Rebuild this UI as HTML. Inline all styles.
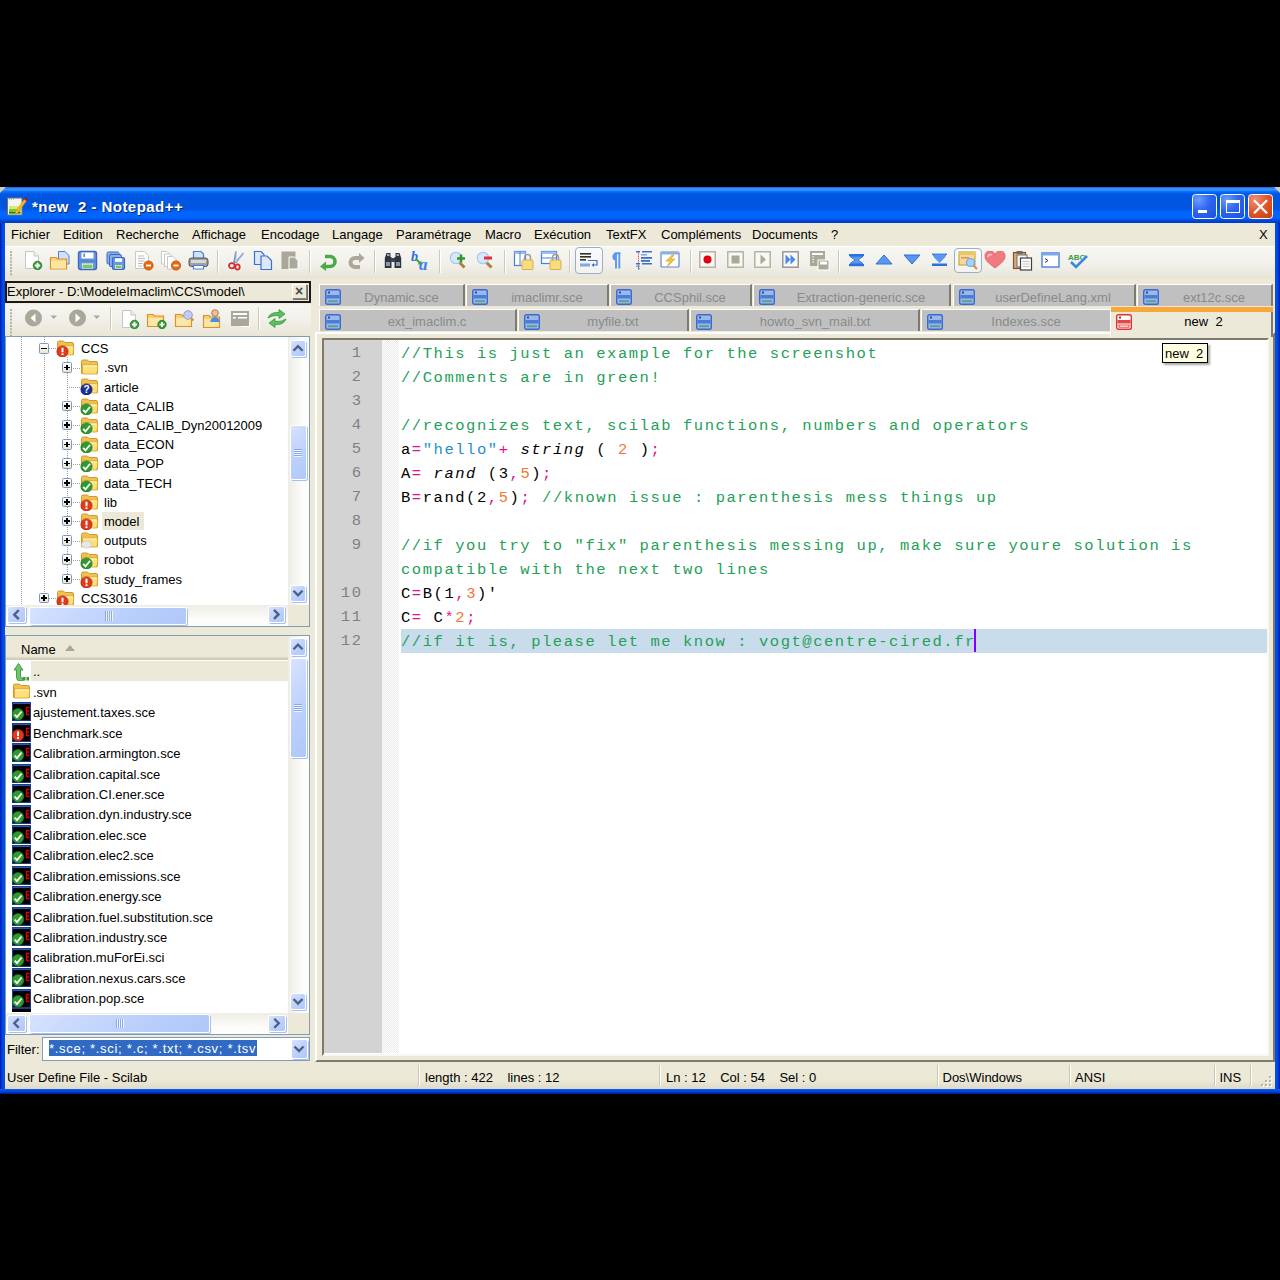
<!DOCTYPE html>
<html><head><meta charset="utf-8">
<style>
*{margin:0;padding:0;box-sizing:border-box}
html,body{width:1280px;height:1280px;background:#000;overflow:hidden}
body{position:relative;font-family:"Liberation Sans",sans-serif;font-size:13px;color:#000}
.a{position:absolute}
.t{position:absolute;white-space:pre;line-height:1}
#win{left:0;top:187px;width:1280px;height:906px;background:#0842D8}
#title{left:0;top:187px;width:1280px;height:36px;border-radius:0;
 background:linear-gradient(#1060F0 0px,#3A94FF 2px,#3A94FF 3px,#0A70FF 4.5px,#0058E2 7px,#0055E0 13px,#0055E0 21px,#005AEA 23px,#0066FF 25px,#0064FC 31px,#0048D8 33.5px,#0038C0 36px)}
#client{left:5px;top:223px;width:1270px;height:866px;background:#ECE9D8}
#menubar{left:5px;top:223px;width:1270px;height:23px;background:#ECE9D8}
#toolbar{left:5px;top:246px;width:1270px;height:33px;background:linear-gradient(#F7F6F1,#F1F0EA 55%,#E8E5D5);border-top:1px solid #fff}
.menu{top:227.6px}
.btn{top:194px;width:25px;height:25px;border:1px solid #fff;border-radius:3px}
.sbtn{border:1px solid #fff;border-radius:2.5px;background:linear-gradient(135deg,#D6E2FF,#BACFFB 60%,#B0C8F8);box-shadow:1px 1px 0 #A9BFE6}
.sep{position:absolute;width:2px;background:linear-gradient(90deg,#C5C2B2 50%,#fff 50%)}
.tab{position:absolute;height:22px;background:#C0C0C0;border-top:1.5px solid #fff;border-left:1.5px solid #fff;border-right:2px solid #7E7B6C;color:#808080;font-size:13px}
.tt{position:absolute;width:200px;text-align:center;white-space:pre;line-height:1;color:#8A8A8A}
.tab span{position:absolute;top:5px;white-space:pre;line-height:1}
.fn{font-style:italic}
.code{font-family:"Liberation Mono",monospace;font-size:15.5px;letter-spacing:1.545px;position:absolute;white-space:pre;line-height:24px;left:401px}
.cm{color:#24A058}
.op{color:#E0108A}
.nm{color:#F07830}
.st{color:#1E90D0}
.ln{position:absolute;font-family:"Liberation Mono",monospace;font-size:15.5px;letter-spacing:1.545px;color:#808080;text-align:right;width:40px;left:322.5px;line-height:24px}
</style></head><body>
<div id="win" class="a"></div>
<div id="title" class="a"></div>
<div class="t" style="left:32px;top:199px;color:#fff;font-weight:bold;font-size:15px;letter-spacing:0.45px;text-shadow:1px 1px 0 #0A246A">*new  2 - Notepad++</div>

<!-- title icon & buttons -->
<svg class="a" style="left:6px;top:195px" width="22" height="22" viewBox="0 0 22 22">
<rect x="1.5" y="3" width="14.5" height="17" fill="#F4F4F0" stroke="#707068" stroke-width="1"/>
<rect x="3" y="11" width="11.5" height="7.5" fill="#7CC830"/>
<rect x="3" y="11" width="11.5" height="3" fill="#D8E878"/>
<rect x="3" y="17" width="11.5" height="1.5" fill="#208010"/>
<path d="M3 4 H8" stroke="#6890D0" stroke-width="1.2" stroke-dasharray="1 1"/>
<path d="M10 18 L19.5 5" stroke="#E8A010" stroke-width="3"/>
<path d="M10 18 L19.5 5" stroke="#F8D040" stroke-width="1"/>
<circle cx="20" cy="4" r="1.6" fill="#C01010"/>
</svg>
<div class="a btn" style="left:1192px;top:194.3px;width:25.3px;height:25px;border:1.2px solid #fff;border-radius:3.5px;background:radial-gradient(circle at 25% 20%,#6A9CFF 0%,#2E66F0 45%,#1C50DC 100%)"></div>
<div class="a" style="left:1198px;top:210px;width:9px;height:3.3px;background:#fff"></div>
<div class="a btn" style="left:1220px;top:194.3px;width:25px;height:25px;border:1.2px solid #fff;border-radius:3.5px;background:radial-gradient(circle at 25% 20%,#6A9CFF 0%,#2E66F0 45%,#1C50DC 100%)"></div>
<div class="a" style="left:1226px;top:200px;width:13.5px;height:13.3px;border:1.3px solid #fff;border-top:3.5px solid #fff"></div>
<div class="a btn" style="left:1248px;top:194.3px;width:24.7px;height:25px;border:1.2px solid #fff;border-radius:3.5px;background:radial-gradient(circle at 25% 20%,#F09070 0%,#E25A30 45%,#C83C10 100%)"></div>
<svg class="a" style="left:1252px;top:199px" width="17" height="16" viewBox="0 0 17 16"><path d="M2 1.2 L15 14.2 M15 1.2 L2 14.2" stroke="#fff" stroke-width="2.3"/></svg>
<div id="client" class="a"></div>
<!-- window borders -->
<div class="a" style="left:0;top:223px;width:5px;height:870px;background:linear-gradient(90deg,#0018B0,#0040D8 40%,#0050E8 70%,#0848E0)"></div>
<div class="a" style="left:1275px;top:223px;width:5px;height:870px;background:linear-gradient(90deg,#0848E0,#0050E8 30%,#0040D8 60%,#0018B0)"></div>
<div class="a" style="left:0;top:1089px;width:1280px;height:4.5px;background:linear-gradient(#0A5CF0,#0048D8 45%,#0028B8 80%,#0018A0)"></div>
<svg class="a" style="left:0;top:187px" width="7" height="7" viewBox="0 0 7 7"><path d="M0 0 H6 L0 6 Z" fill="#D0CCBC"/></svg>
<svg class="a" style="left:1273px;top:187px" width="7" height="7" viewBox="0 0 7 7"><path d="M1 0 H7 V6 Z" fill="#D0CCBC"/></svg>

<div id="menubar" class="a"></div>
<div class="t menu" style="left:11px">Fichier</div>
<div class="t menu" style="left:63px">Edition</div>
<div class="t menu" style="left:116px">Recherche</div>
<div class="t menu" style="left:192px">Affichage</div>
<div class="t menu" style="left:261px">Encodage</div>
<div class="t menu" style="left:332px">Langage</div>
<div class="t menu" style="left:396px">Paramétrage</div>
<div class="t menu" style="left:485px">Macro</div>
<div class="t menu" style="left:534px">Exécution</div>
<div class="t menu" style="left:606px">TextFX</div>
<div class="t menu" style="left:661px">Compléments</div>
<div class="t menu" style="left:752px">Documents</div>
<div class="t menu" style="left:831px">?</div>
<div class="t menu" style="left:1259px">X</div>
<div id="toolbar" class="a"></div>
<!--TB-->
<svg class="a" style="left:9px;top:251px" width="4" height="26" viewBox="0 0 4 26"><rect x="1" y="0.0" width="2" height="2" fill="#B8B4A2"/><rect x="1" y="3.2" width="2" height="2" fill="#B8B4A2"/><rect x="1" y="6.4" width="2" height="2" fill="#B8B4A2"/><rect x="1" y="9.600000000000001" width="2" height="2" fill="#B8B4A2"/><rect x="1" y="12.8" width="2" height="2" fill="#B8B4A2"/><rect x="1" y="16.0" width="2" height="2" fill="#B8B4A2"/><rect x="1" y="19.200000000000003" width="2" height="2" fill="#B8B4A2"/><rect x="1" y="22.400000000000002" width="2" height="2" fill="#B8B4A2"/></svg>
<svg class="a" style="left:23px;top:250px" width="20" height="20" viewBox="0 0 20 20"><path d="M2.5 1.5 H11 L15.5 6 V18.5 H2.5 Z" fill="#fff" stroke="#C6C6C6" stroke-width="1"/><path d="M11 1.5 V6 H15.5" fill="#EEE" stroke="#C6C6C6"/><circle cx="14.5" cy="15.5" r="4.3" fill="#3A9A3A" stroke="#1F7A1F" stroke-width="0.8"/><path d="M14.5 12.8 V18.2 M11.8 15.5 H17.2" stroke="#fff" stroke-width="1.8"/></svg>
<svg class="a" style="left:49px;top:250px" width="22" height="20" viewBox="0 0 22 20"><path d="M9.5 1.5 H16 L20 5.5 V14 H9.5 Z" fill="#CFE0F8" stroke="#4A80D8" stroke-width="1"/><path d="M1.5 7.5 H7 L8.5 9 H17.5 V19 H1.5 Z" fill="#F8D880" stroke="#E0902A" stroke-width="1.2"/><path d="M2 11 H17 V18.5 H2 Z" fill="#FBE6A0"/></svg>
<svg class="a" style="left:77px;top:250px" width="21" height="21" viewBox="0 0 21 21"><rect x="1.5" y="1.5" width="18" height="18" rx="2" fill="#6A98DC" stroke="#3A68C0" stroke-width="1.4"/><rect x="4.5" y="2.5" width="12" height="6" fill="#fff"/><rect x="6.5" y="3.5" width="1.3" height="3.5" fill="#3A68C0"/><rect x="2.5" y="9.5" width="16" height="3" fill="#5A88D0"/><rect x="5" y="13.5" width="11" height="5" fill="#fff"/><rect x="5.5" y="14.5" width="10" height="3.5" fill="#7CC860"/></svg>
<svg class="a" style="left:106px;top:251px" width="20" height="20" viewBox="0 0 20 20"><rect x="1" y="1" width="12" height="12" rx="1.5" fill="#8AB0E8" stroke="#3A68C0" stroke-width="1"/><rect x="3.5" y="3.5" width="12" height="12" rx="1.5" fill="#8AB0E8" stroke="#3A68C0" stroke-width="1"/><rect x="6.5" y="6.5" width="12" height="12" rx="1.5" fill="#6A98DC" stroke="#3A68C0" stroke-width="1.2"/><rect x="9" y="7.3" width="7" height="3.5" fill="#fff"/><rect x="9" y="14" width="7" height="3.5" fill="#fff"/><rect x="9.5" y="14.5" width="6" height="2.5" fill="#7CC860"/></svg>
<svg class="a" style="left:134px;top:250px" width="20" height="21" viewBox="0 0 20 21"><path d="M1.5 1.5 H10.5 L14.5 5.5 V18.5 H1.5 Z" fill="#fff" stroke="#C8C8C8" stroke-width="1"/><path d="M4 6 H10 M4 8.5 H11 M4 11 H11 M4 13.5 H9 M4 16 H8" stroke="#A8A8A8" stroke-width="0.8"/><circle cx="14.5" cy="15.5" r="4.6" fill="#E86A10" stroke="#C04A00" stroke-width="0.8"/><path d="M12 15.5 H17" stroke="#fff" stroke-width="1.8"/></svg>
<svg class="a" style="left:160px;top:250px" width="21" height="21" viewBox="0 0 21 21"><path d="M1.5 1.5 H7 L9.5 4 V14 H1.5 Z" fill="#fff" stroke="#C8C8C8"/><path d="M4.5 4 H10 L12.5 6.5 V16.5 H4.5 Z" fill="#fff" stroke="#C8C8C8"/><path d="M7.5 6.5 H13 L16 9.5 V19 H7.5 Z" fill="#fff" stroke="#C8C8C8"/><circle cx="16" cy="15.5" r="4.6" fill="#E86A10" stroke="#C04A00" stroke-width="0.8"/><path d="M13.5 15.5 H18.5" stroke="#fff" stroke-width="1.8"/></svg>
<svg class="a" style="left:188px;top:250px" width="21" height="21" viewBox="0 0 21 21"><path d="M5.5 1.5 H13 L15.5 4 V9 H5.5 Z" fill="#CFE2FA" stroke="#4A80D8" stroke-width="1.2"/><rect x="1" y="8" width="19" height="8.5" rx="2.5" fill="#A0A0A0" stroke="#505050" stroke-width="1"/><rect x="3" y="10" width="15" height="3" fill="#D8D8D8"/><path d="M5.5 15.5 H15.5 V19 H5.5 Z" fill="#fff" stroke="#4A80D8" stroke-width="1.2"/></svg>
<div class="a" style="left:217px;top:250px;width:1px;height:23px;background:#CDC9B5"></div><div class="a" style="left:218px;top:250px;width:1px;height:23px;background:#fff"></div>
<svg class="a" style="left:227px;top:250px" width="18" height="21" viewBox="0 0 18 21"><path d="M7 13 L9 1.5 M8.5 13 L16.5 3" stroke="#6E90C0" stroke-width="1.6"/><path d="M9 1.5 L9.5 12 M16.5 3 L10 12" stroke="#B8CCE8" stroke-width="0.8"/><ellipse cx="4.8" cy="15.8" rx="2.8" ry="2.6" fill="none" stroke="#D03030" stroke-width="1.8"/><ellipse cx="10.5" cy="17" rx="2.2" ry="2.6" fill="none" stroke="#D03030" stroke-width="1.8"/></svg>
<svg class="a" style="left:253px;top:250px" width="21" height="21" viewBox="0 0 21 21"><path d="M1.5 1.5 H8 L11 4.5 V14.5 H1.5 Z" fill="#DCE8F8" stroke="#3C70D0" stroke-width="1.2"/><path d="M8 6 H14 L18.5 10.5 V19.5 H8 Z" fill="#DCE8F8" stroke="#3C70D0" stroke-width="1.2"/></svg>
<svg class="a" style="left:280px;top:250px" width="22" height="21" viewBox="0 0 22 21"><rect x="1.5" y="1.5" width="14" height="17.5" fill="#ACA899"/><path d="M9 7 H14.5 L18 10.5 V19 H9 Z" fill="#ACA899" stroke="#fff" stroke-width="1"/></svg>
<div class="a" style="left:309px;top:250px;width:1px;height:23px;background:#CDC9B5"></div><div class="a" style="left:310px;top:250px;width:1px;height:23px;background:#fff"></div>
<svg class="a" style="left:319px;top:252px" width="20" height="19" viewBox="0 0 20 19"><path d="M6 4.5 H11 A5 5 0 0 1 11 14.5 H6" fill="none" stroke="#4AAA4A" stroke-width="3.6"/><path d="M1 14.5 L7 9.5 V19 Z" fill="#4AAA4A"/></svg>
<svg class="a" style="left:346px;top:252px" width="20" height="19" viewBox="0 0 20 19"><path d="M14 6 H9 A4.5 4.5 0 0 0 9 15 H14" fill="none" stroke="#ACA899" stroke-width="4"/><path d="M18.5 6 L13 1 V11 Z" fill="#ACA899"/></svg>
<div class="a" style="left:374px;top:250px;width:1px;height:23px;background:#CDC9B5"></div><div class="a" style="left:375px;top:250px;width:1px;height:23px;background:#fff"></div>
<svg class="a" style="left:384px;top:252px" width="18" height="17" viewBox="0 0 18 17"><path d="M2.5 1 H6.5 V5 H7.5 V16 H0.8 V6 Z" fill="#2E3440"/><path d="M15.5 1 H11.5 V5 H10.5 V16 H17.2 V6 Z" fill="#2E3440"/><rect x="7" y="6" width="4" height="4" fill="#3E4450"/><rect x="3" y="2" width="2.5" height="2" fill="#A0A8B8"/><rect x="12.5" y="2" width="2.5" height="2" fill="#A0A8B8"/><rect x="2" y="10" width="4" height="4" fill="#9098A8"/><rect x="12" y="10" width="4" height="4" fill="#9098A8"/></svg>
<svg class="a" style="left:410px;top:250px" width="22" height="21" viewBox="0 0 22 21"><text x="1" y="11" font-family="Liberation Serif" font-style="italic" font-weight="bold" font-size="14" fill="#2A70E0">b</text><text x="9" y="20" font-family="Liberation Serif" font-style="italic" font-weight="bold" font-size="17" fill="#3A80F0">a</text><path d="M6 9 L10 13" stroke="#3AA03A" stroke-width="1.8"/><path d="M11.5 14.5 L11.5 10.5 L7.5 14.5 Z" fill="#3AA03A"/></svg>
<div class="a" style="left:439px;top:250px;width:1px;height:23px;background:#CDC9B5"></div><div class="a" style="left:440px;top:250px;width:1px;height:23px;background:#fff"></div>
<svg class="a" style="left:449px;top:251px" width="19" height="18" viewBox="0 0 19 18"><path d="M10 11 L15.5 16.5" stroke="#B08040" stroke-width="3"/><circle cx="7" cy="7" r="5.7" fill="#D8E8FA" stroke="#A8C8F0" stroke-width="1.2"/><path d="M12 3.5 V11.5 M8 7.5 H16" stroke="#2E9A2E" stroke-width="2.6"/></svg>
<svg class="a" style="left:476px;top:251px" width="19" height="18" viewBox="0 0 19 18"><path d="M10 11 L15.5 16.5" stroke="#B08040" stroke-width="3"/><circle cx="7" cy="7" r="5.7" fill="#D8E8FA" stroke="#A8C8F0" stroke-width="1.2"/><rect x="8" y="5.5" width="8" height="3" fill="#E03040"/></svg>
<div class="a" style="left:504px;top:250px;width:1px;height:23px;background:#CDC9B5"></div><div class="a" style="left:505px;top:250px;width:1px;height:23px;background:#fff"></div>
<svg class="a" style="left:513px;top:250px" width="21" height="21" viewBox="0 0 21 21"><rect x="1.5" y="1.5" width="11" height="14" fill="#fff" stroke="#4A80D8" stroke-width="1.2"/><rect x="1.5" y="1.5" width="11" height="2.5" fill="#9CC0F0"/><path d="M7 1.5 V15.5" stroke="#4A80D8"/><rect x="9" y="10" width="11" height="9.5" rx="1" fill="#F8DC80" stroke="#D8B050"/><path d="M11.5 10 V7.5 A3 3 0 0 1 17.5 7.5 V10" fill="none" stroke="#A0A0A0" stroke-width="1.6"/></svg>
<svg class="a" style="left:540px;top:250px" width="22" height="21" viewBox="0 0 22 21"><rect x="1.5" y="1.5" width="15" height="12" fill="#fff" stroke="#4A80D8" stroke-width="1.2"/><rect x="1.5" y="1.5" width="15" height="2.5" fill="#9CC0F0"/><path d="M1.5 8 H16.5" stroke="#4A80D8"/><rect x="10" y="10" width="11" height="9.5" rx="1" fill="#F8DC80" stroke="#D8B050"/><path d="M12.5 10 V7.5 A3 3 0 0 1 18.5 7.5 V10" fill="none" stroke="#A0A0A0" stroke-width="1.6"/></svg>
<div class="a" style="left:569px;top:250px;width:1px;height:23px;background:#CDC9B5"></div><div class="a" style="left:570px;top:250px;width:1px;height:23px;background:#fff"></div>
<div class="a" style="left:575px;top:247px;width:27.5px;height:26.5px;border:1.5px solid #98AECD;border-radius:4px;background:linear-gradient(#FBFBFD,#F2F2F0)"></div>
<svg class="a" style="left:579px;top:252px" width="20" height="17" viewBox="0 0 20 17"><rect x="1" y="1" width="11" height="1.6" fill="#303030"/><rect x="1" y="4" width="11" height="1.6" fill="#303030"/><rect x="1" y="7" width="6" height="1.6" fill="#303030"/><path d="M9 8.5 H18 V13 H14" fill="none" stroke="#3A70D0" stroke-width="1.2"/><path d="M12.5 13 L15 11 V15 Z" fill="#3A70D0"/><rect x="1" y="11.5" width="10" height="3" fill="#7AA8E8"/></svg>
<svg class="a" style="left:608px;top:252px" width="14" height="18" viewBox="0 0 14 18"><path d="M6.5 1.2 H12.5 M8 1.2 V16.5 M11.3 1.2 V16.5" fill="none" stroke="#5A98F0" stroke-width="1.9"/><path d="M8 1 A3.6 3.8 0 0 0 8 8.6 Z" fill="#5A98F0"/></svg>
<svg class="a" style="left:635px;top:250px" width="19" height="20" viewBox="0 0 19 20"><path d="M3.5 1 V19" stroke="#E03030" stroke-width="1" stroke-dasharray="1.3 1"/><rect x="1" y="1" width="4" height="1.5" fill="#3A70D0"/><rect x="7" y="1" width="10" height="1.5" fill="#3A70D0"/><rect x="6" y="4" width="6" height="1.5" fill="#7AA8E8"/><rect x="6" y="7" width="11" height="1.8" fill="#3A70D0"/><rect x="6" y="10" width="9" height="1.8" fill="#3A70D0"/><rect x="1" y="13" width="4" height="1.5" fill="#3A70D0"/><rect x="7" y="13" width="10" height="1.5" fill="#3A70D0"/><rect x="1" y="15.5" width="4" height="1.5" fill="#7AA8E8"/><rect x="3" y="18" width="1.5" height="1.5" fill="#3A70D0"/></svg>
<svg class="a" style="left:660px;top:251px" width="21" height="18" viewBox="0 0 21 18"><rect x="1" y="1" width="18" height="15" rx="1" fill="#FFFFFF" stroke="#5A88D0" stroke-width="1.2"/><rect x="1" y="1" width="18" height="2.5" fill="#8AB0E8"/><path d="M12 4 L6 10 H10 L7 16 L15 8 H11 L14 4 Z" fill="#F0C848" stroke="#C8A020" stroke-width="0.6"/></svg>
<div class="a" style="left:690px;top:250px;width:1px;height:23px;background:#CDC9B5"></div><div class="a" style="left:691px;top:250px;width:1px;height:23px;background:#fff"></div>
<svg class="a" style="left:699px;top:251px" width="17" height="17" viewBox="0 0 17 17"><rect x="0.8" y="0.8" width="15.4" height="15.4" fill="#F8F8F4" stroke="#ACA899" stroke-width="1.3"/><circle cx="8.5" cy="8.5" r="4" fill="#E00010"/></svg>
<svg class="a" style="left:727px;top:251px" width="17" height="17" viewBox="0 0 17 17"><rect x="0.8" y="0.8" width="15.4" height="15.4" fill="#F8F8F4" stroke="#ACA899" stroke-width="1.3"/><rect x="4.5" y="4.5" width="8" height="8" fill="#ACA899"/></svg>
<svg class="a" style="left:754px;top:251px" width="17" height="17" viewBox="0 0 17 17"><rect x="0.8" y="0.8" width="15.4" height="15.4" fill="#F8F8F4" stroke="#ACA899" stroke-width="1.3"/><path d="M6.5 3.5 L12 8.5 L6.5 13.5 Z" fill="#ACA899"/></svg>
<svg class="a" style="left:782px;top:251px" width="17" height="17" viewBox="0 0 17 17"><rect x="0.8" y="0.8" width="15.4" height="15.4" fill="#F8F8F4" stroke="#8A8A8A" stroke-width="1.3"/><path d="M3.5 3.5 L8.5 8.5 L3.5 13.5 Z M8.5 3.5 L13.5 8.5 L8.5 13.5 Z" fill="#4A88F0"/></svg>
<svg class="a" style="left:809px;top:250px" width="21" height="21" viewBox="0 0 21 21"><rect x="1" y="1" width="15" height="15" fill="#ACA899"/><rect x="3" y="3" width="11" height="2" fill="#fff"/><path d="M3.5 7 H5 M3.5 9.5 H5 M3.5 12 H5" stroke="#fff" stroke-width="1.2"/><rect x="9" y="10" width="11" height="10" fill="#ACA899" stroke="#fff" stroke-width="1"/><rect x="11" y="11.5" width="7" height="3" fill="#fff"/></svg>
<div class="a" style="left:838px;top:250px;width:1px;height:23px;background:#CDC9B5"></div><div class="a" style="left:839px;top:250px;width:1px;height:23px;background:#fff"></div>
<svg class="a" style="left:848px;top:253px" width="17" height="14" viewBox="0 0 17 14"><rect x="1" y="1" width="15" height="2.2" fill="#2A70E0"/><path d="M2 3.5 H15 L10 7 L15 10.5 H2 L7 7 Z" fill="#5A98F0" stroke="#2A70E0" stroke-width="0.8"/><rect x="1" y="11" width="15" height="2.2" fill="#2A70E0"/></svg>
<svg class="a" style="left:875px;top:254px" width="18" height="11" viewBox="0 0 18 11"><path d="M9 1 L17 10 H1 Z" fill="#5A98F0" stroke="#2A70E0" stroke-width="1"/></svg>
<svg class="a" style="left:903px;top:254px" width="18" height="11" viewBox="0 0 18 11"><path d="M1 1 H17 L9 10 Z" fill="#5A98F0" stroke="#2A70E0" stroke-width="1"/></svg>
<svg class="a" style="left:931px;top:253px" width="17" height="14" viewBox="0 0 17 14"><path d="M1 1 H16 L10 6.5 H7 Z" fill="#5A98F0" stroke="#2A70E0" stroke-width="0.8"/><path d="M2 3.5 H15 L8.5 10 Z" fill="#5A98F0"/><rect x="1" y="10.5" width="15" height="2.5" fill="#2A70E0"/></svg>
<div class="a" style="left:954px;top:247.5px;width:27.5px;height:25.5px;border:1.5px solid #98AECD;border-radius:4px;background:linear-gradient(#FBFBFD,#F2F2F0)"></div>
<svg class="a" style="left:958px;top:251px" width="21" height="19" viewBox="0 0 21 19"><rect x="1" y="1" width="16" height="13" fill="#F8D8A0" stroke="#C8B030" stroke-width="1.2"/><rect x="1" y="1" width="16" height="3" fill="#E8C860"/><rect x="3" y="6" width="8" height="1.5" fill="#E09050"/><path d="M15 14 L19 18" stroke="#D09050" stroke-width="2.2"/><circle cx="12.5" cy="11.5" r="4" fill="#A8D0F8" stroke="#6AA8E8" stroke-width="1.2"/></svg>
<svg class="a" style="left:984px;top:251px" width="22" height="18" viewBox="0 0 22 18"><path d="M11 17 C4 12 1 9 1 5.5 A4.5 4.5 0 0 1 11 4 A4.5 4.5 0 0 1 21 5.5 C21 9 18 12 11 17 Z" fill="#F07A80" stroke="#E06068" stroke-width="0.8"/><path d="M4 6 A2.5 2.5 0 0 1 8 4" stroke="#FFC8D0" stroke-width="1.5" fill="none"/></svg>
<svg class="a" style="left:1012px;top:250px" width="21" height="21" viewBox="0 0 21 21"><rect x="1.5" y="2.5" width="12" height="16" fill="#D8A878" stroke="#8A5028" stroke-width="1.2"/><rect x="4.5" y="1" width="6" height="3" fill="#6A6A6A"/><rect x="5" y="5" width="10" height="12" fill="#F8F8F8" stroke="#707070" stroke-width="1"/><rect x="8.5" y="8" width="11" height="12" fill="#FFFFFF" stroke="#404040" stroke-width="1.2"/><path d="M10.5 11.5 H17.5 M10.5 14 H17.5 M10.5 16.5 H17.5" stroke="#B0B0B0" stroke-width="0.8"/></svg>
<svg class="a" style="left:1041px;top:252px" width="19" height="16" viewBox="0 0 19 16"><rect x="1" y="1" width="17" height="14" fill="#fff" stroke="#4A80D8" stroke-width="1.4"/><rect x="1" y="1" width="17" height="2.5" fill="#7AA8E8"/><path d="M4 6.5 L7 8.5 L4 10.5" fill="none" stroke="#404040" stroke-width="1"/></svg>
<svg class="a" style="left:1067px;top:252px" width="22" height="17" viewBox="0 0 22 17"><text x="1" y="7.5" font-family="Liberation Sans" font-weight="bold" font-size="8" fill="#3A9A4A">ABC</text><path d="M4 10 L9 15 L20 4" fill="none" stroke="#3A88E0" stroke-width="2.6"/></svg>
<!--/TB-->


<!-- LEFT PANEL -->
<div class="a" style="left:5px;top:281px;width:306px;height:22px;border:2px solid #1a1a1a;background:#ECE9D8"></div>
<div class="t" style="left:7px;top:285px">Explorer - D:\ModeleImaclim\CCS\model\</div>
<div class="a" style="left:292px;top:284px;width:15px;height:15px;background:#ECE9D8;border-top:1px solid #fff;border-left:1px solid #fff;border-right:1px solid #8A877A;border-bottom:1px solid #8A877A;box-shadow:1px 1px 0 #716F64"></div>
<div class="t" style="left:295px;top:284px;font-size:14px;font-weight:bold;color:#4a4a44">×</div>
<div class="a" style="left:5px;top:303px;width:306px;height:33px;background:linear-gradient(#ECE9D8 0px,#F6F5F0 2px,#F1F0EA 50%,#E9E6D6 100%)"></div>

<!-- tree -->
<div class="a" style="left:5px;top:336px;width:305px;height:291px;background:#fff;border:1px solid #7F9DB9"></div>
<div class="a" style="left:102px;top:512px;width:42px;height:18px;background:#ECE9D8"></div>

<div class="tree">
<div class="t" style="left:81px;top:341.8px">CCS</div>
<div class="t" style="left:104px;top:361.3px">.svn</div>
<div class="t" style="left:104px;top:380.5px">article</div>
<div class="t" style="left:104px;top:399.7px">data_CALIB</div>
<div class="t" style="left:104px;top:418.9px">data_CALIB_Dyn20012009</div>
<div class="t" style="left:104px;top:438.1px">data_ECON</div>
<div class="t" style="left:104px;top:457.3px">data_POP</div>
<div class="t" style="left:104px;top:476.5px">data_TECH</div>
<div class="t" style="left:104px;top:495.7px">lib</div>
<div class="t" style="left:104px;top:514.9px">model</div>
<div class="t" style="left:104px;top:534.1px">outputs</div>
<div class="t" style="left:104px;top:553.3px">robot</div>
<div class="t" style="left:104px;top:572.5px">study_frames</div>
<div class="t" style="left:81px;top:591.7px">CCS3016</div>
</div>

<!-- list -->
<div class="a" style="left:5px;top:635px;width:305px;height:400px;background:#fff;border:1px solid #7F9DB9"></div>
<div class="a" style="left:6px;top:636px;width:283px;height:24px;background:linear-gradient(#ECE9D8 85%,#D8D2BD 92%,#CBC7B8)"></div>
<div class="t" style="left:21px;top:643px">Name</div>
<div class="a" style="left:65px;top:645px;width:0;height:0;border-left:5.5px solid transparent;border-right:5.5px solid transparent;border-bottom:6px solid #ACA899"></div>
<div class="a" style="left:31px;top:661px;width:258px;height:20px;background:#ECE9D8"></div>
<div class="list">
<div class="t" style="left:33px;top:665.3px">..</div>
<div class="t" style="left:33px;top:685.8px">.svn</div>
<div class="t" style="left:33px;top:706.2px">ajustement.taxes.sce</div>
<div class="t" style="left:33px;top:726.7px">Benchmark.sce</div>
<div class="t" style="left:33px;top:747.1px">Calibration.armington.sce</div>
<div class="t" style="left:33px;top:767.5px">Calibration.capital.sce</div>
<div class="t" style="left:33px;top:788.0px">Calibration.CI.ener.sce</div>
<div class="t" style="left:33px;top:808.4px">Calibration.dyn.industry.sce</div>
<div class="t" style="left:33px;top:828.8px">Calibration.elec.sce</div>
<div class="t" style="left:33px;top:849.3px">Calibration.elec2.sce</div>
<div class="t" style="left:33px;top:869.7px">Calibration.emissions.sce</div>
<div class="t" style="left:33px;top:890.1px">Calibration.energy.sce</div>
<div class="t" style="left:33px;top:910.6px">Calibration.fuel.substitution.sce</div>
<div class="t" style="left:33px;top:931.0px">Calibration.industry.sce</div>
<div class="t" style="left:33px;top:951.4px">calibration.muForEi.sci</div>
<div class="t" style="left:33px;top:971.8px">Calibration.nexus.cars.sce</div>
<div class="t" style="left:33px;top:992.3px">Calibration.pop.sce</div>
</div>

<!--ITEMS-->
<div class="a" style="left:21px;top:337px;width:1px;height:268px;background:repeating-linear-gradient(#A0A0A0 0 1px,transparent 1px 2px)"></div>
<div class="a" style="left:44px;top:337px;width:1px;height:261px;background:repeating-linear-gradient(#A0A0A0 0 1px,transparent 1px 2px)"></div>
<div class="a" style="left:67px;top:357px;width:1px;height:223px;background:repeating-linear-gradient(#A0A0A0 0 1px,transparent 1px 2px)"></div>
<div class="a" style="left:49px;top:348.3px;width:7px;height:1px;background:repeating-linear-gradient(90deg,#A0A0A0 0 1px,transparent 1px 2px)"></div>
<div class="a" style="left:38.5px;top:343px;width:10.5px;height:10.5px;border:1px solid #7A98C0;border-radius:1.5px;background:linear-gradient(#FFFFFF,#E8E4D4)"></div><div class="a" style="left:41.0px;top:347.5px;width:5.5px;height:1.6px;background:#000"></div>
<svg class="a" style="left:56px;top:340px" width="20" height="17" viewBox="0 0 20 17"><path d="M1.5 2.5 Q1.5 1 3 1 H7.5 L9 2.5 H16 Q17.5 2.5 17.5 4 V14.5 H1.5 Z" fill="#F0C050" stroke="#D09A30" stroke-width="1"/><path d="M2.5 6 H17 Q18 6 17.8 7.5 L17 15 H2.5 Z" fill="#FCE07A" stroke="#D8A030" stroke-width="0.8"/><path d="M3 7 H16.5" stroke="#FFF4C0" stroke-width="1.2"/><circle cx="6.5" cy="11.5" r="5.6" fill="#E03A1A" stroke="#B02010" stroke-width="0.7"/><rect x="5.5" y="7.7" width="2" height="4.6" fill="#fff"/><rect x="5.5" y="13.3" width="2" height="1.8" fill="#fff"/></svg>
<div class="a" style="left:67px;top:368px;width:13px;height:1px;background:repeating-linear-gradient(90deg,#A0A0A0 0 1px,transparent 1px 2px)"></div>
<div class="a" style="left:61.5px;top:362.13000000000005px;width:10.5px;height:10.5px;border:1px solid #7A98C0;border-radius:1.5px;background:linear-gradient(#FFFFFF,#E8E4D4)"></div><div class="a" style="left:64.0px;top:366.63000000000005px;width:5.5px;height:1.6px;background:#000"></div><div class="a" style="left:66.0px;top:364.63000000000005px;width:1.6px;height:5.5px;background:#000"></div>
<svg class="a" style="left:79.5px;top:359.23px" width="20" height="17" viewBox="0 0 20 17"><path d="M1.5 2.5 Q1.5 1 3 1 H7.5 L9 2.5 H16 Q17.5 2.5 17.5 4 V14.5 H1.5 Z" fill="#F0C050" stroke="#D09A30" stroke-width="1"/><path d="M2.5 6 H17 Q18 6 17.8 7.5 L17 15 H2.5 Z" fill="#FCE07A" stroke="#D8A030" stroke-width="0.8"/><path d="M3 7 H16.5" stroke="#FFF4C0" stroke-width="1.2"/></svg>
<div class="a" style="left:67px;top:387px;width:13px;height:1px;background:repeating-linear-gradient(90deg,#A0A0A0 0 1px,transparent 1px 2px)"></div>
<svg class="a" style="left:79.5px;top:378.46px" width="20" height="17" viewBox="0 0 20 17"><path d="M1.5 2.5 Q1.5 1 3 1 H7.5 L9 2.5 H16 Q17.5 2.5 17.5 4 V14.5 H1.5 Z" fill="#F0C050" stroke="#D09A30" stroke-width="1"/><path d="M2.5 6 H17 Q18 6 17.8 7.5 L17 15 H2.5 Z" fill="#FCE07A" stroke="#D8A030" stroke-width="0.8"/><path d="M3 7 H16.5" stroke="#FFF4C0" stroke-width="1.2"/><circle cx="6.5" cy="11.5" r="5.6" fill="#1A2E9A" stroke="#0A1A70" stroke-width="0.7"/><text x="6.5" y="15.1" text-anchor="middle" font-family="Liberation Sans" font-weight="bold" font-size="10" fill="#fff">?</text></svg>
<div class="a" style="left:67px;top:406px;width:13px;height:1px;background:repeating-linear-gradient(90deg,#A0A0A0 0 1px,transparent 1px 2px)"></div>
<div class="a" style="left:61.5px;top:400.59000000000003px;width:10.5px;height:10.5px;border:1px solid #7A98C0;border-radius:1.5px;background:linear-gradient(#FFFFFF,#E8E4D4)"></div><div class="a" style="left:64.0px;top:405.09000000000003px;width:5.5px;height:1.6px;background:#000"></div><div class="a" style="left:66.0px;top:403.09000000000003px;width:1.6px;height:5.5px;background:#000"></div>
<svg class="a" style="left:79.5px;top:397.69px" width="20" height="17" viewBox="0 0 20 17"><path d="M1.5 2.5 Q1.5 1 3 1 H7.5 L9 2.5 H16 Q17.5 2.5 17.5 4 V14.5 H1.5 Z" fill="#F0C050" stroke="#D09A30" stroke-width="1"/><path d="M2.5 6 H17 Q18 6 17.8 7.5 L17 15 H2.5 Z" fill="#FCE07A" stroke="#D8A030" stroke-width="0.8"/><path d="M3 7 H16.5" stroke="#FFF4C0" stroke-width="1.2"/><circle cx="6.5" cy="11.5" r="5.6" fill="#2E9A2E" stroke="#1C7A1C" stroke-width="0.7"/><path d="M3.2 11.8 L5.5 14.3 L10.1 8.7" fill="none" stroke="#fff" stroke-width="1.8"/></svg>
<div class="a" style="left:67px;top:425px;width:13px;height:1px;background:repeating-linear-gradient(90deg,#A0A0A0 0 1px,transparent 1px 2px)"></div>
<div class="a" style="left:61.5px;top:419.82000000000005px;width:10.5px;height:10.5px;border:1px solid #7A98C0;border-radius:1.5px;background:linear-gradient(#FFFFFF,#E8E4D4)"></div><div class="a" style="left:64.0px;top:424.32000000000005px;width:5.5px;height:1.6px;background:#000"></div><div class="a" style="left:66.0px;top:422.32000000000005px;width:1.6px;height:5.5px;background:#000"></div>
<svg class="a" style="left:79.5px;top:416.92px" width="20" height="17" viewBox="0 0 20 17"><path d="M1.5 2.5 Q1.5 1 3 1 H7.5 L9 2.5 H16 Q17.5 2.5 17.5 4 V14.5 H1.5 Z" fill="#F0C050" stroke="#D09A30" stroke-width="1"/><path d="M2.5 6 H17 Q18 6 17.8 7.5 L17 15 H2.5 Z" fill="#FCE07A" stroke="#D8A030" stroke-width="0.8"/><path d="M3 7 H16.5" stroke="#FFF4C0" stroke-width="1.2"/><circle cx="6.5" cy="11.5" r="5.6" fill="#2E9A2E" stroke="#1C7A1C" stroke-width="0.7"/><path d="M3.2 11.8 L5.5 14.3 L10.1 8.7" fill="none" stroke="#fff" stroke-width="1.8"/></svg>
<div class="a" style="left:67px;top:444px;width:13px;height:1px;background:repeating-linear-gradient(90deg,#A0A0A0 0 1px,transparent 1px 2px)"></div>
<div class="a" style="left:61.5px;top:439.05000000000007px;width:10.5px;height:10.5px;border:1px solid #7A98C0;border-radius:1.5px;background:linear-gradient(#FFFFFF,#E8E4D4)"></div><div class="a" style="left:64.0px;top:443.55000000000007px;width:5.5px;height:1.6px;background:#000"></div><div class="a" style="left:66.0px;top:441.55000000000007px;width:1.6px;height:5.5px;background:#000"></div>
<svg class="a" style="left:79.5px;top:436.15000000000003px" width="20" height="17" viewBox="0 0 20 17"><path d="M1.5 2.5 Q1.5 1 3 1 H7.5 L9 2.5 H16 Q17.5 2.5 17.5 4 V14.5 H1.5 Z" fill="#F0C050" stroke="#D09A30" stroke-width="1"/><path d="M2.5 6 H17 Q18 6 17.8 7.5 L17 15 H2.5 Z" fill="#FCE07A" stroke="#D8A030" stroke-width="0.8"/><path d="M3 7 H16.5" stroke="#FFF4C0" stroke-width="1.2"/><circle cx="6.5" cy="11.5" r="5.6" fill="#2E9A2E" stroke="#1C7A1C" stroke-width="0.7"/><path d="M3.2 11.8 L5.5 14.3 L10.1 8.7" fill="none" stroke="#fff" stroke-width="1.8"/></svg>
<div class="a" style="left:67px;top:464px;width:13px;height:1px;background:repeating-linear-gradient(90deg,#A0A0A0 0 1px,transparent 1px 2px)"></div>
<div class="a" style="left:61.5px;top:458.28000000000003px;width:10.5px;height:10.5px;border:1px solid #7A98C0;border-radius:1.5px;background:linear-gradient(#FFFFFF,#E8E4D4)"></div><div class="a" style="left:64.0px;top:462.78000000000003px;width:5.5px;height:1.6px;background:#000"></div><div class="a" style="left:66.0px;top:460.78000000000003px;width:1.6px;height:5.5px;background:#000"></div>
<svg class="a" style="left:79.5px;top:455.38px" width="20" height="17" viewBox="0 0 20 17"><path d="M1.5 2.5 Q1.5 1 3 1 H7.5 L9 2.5 H16 Q17.5 2.5 17.5 4 V14.5 H1.5 Z" fill="#F0C050" stroke="#D09A30" stroke-width="1"/><path d="M2.5 6 H17 Q18 6 17.8 7.5 L17 15 H2.5 Z" fill="#FCE07A" stroke="#D8A030" stroke-width="0.8"/><path d="M3 7 H16.5" stroke="#FFF4C0" stroke-width="1.2"/><circle cx="6.5" cy="11.5" r="5.6" fill="#2E9A2E" stroke="#1C7A1C" stroke-width="0.7"/><path d="M3.2 11.8 L5.5 14.3 L10.1 8.7" fill="none" stroke="#fff" stroke-width="1.8"/></svg>
<div class="a" style="left:67px;top:483px;width:13px;height:1px;background:repeating-linear-gradient(90deg,#A0A0A0 0 1px,transparent 1px 2px)"></div>
<div class="a" style="left:61.5px;top:477.51000000000005px;width:10.5px;height:10.5px;border:1px solid #7A98C0;border-radius:1.5px;background:linear-gradient(#FFFFFF,#E8E4D4)"></div><div class="a" style="left:64.0px;top:482.01000000000005px;width:5.5px;height:1.6px;background:#000"></div><div class="a" style="left:66.0px;top:480.01000000000005px;width:1.6px;height:5.5px;background:#000"></div>
<svg class="a" style="left:79.5px;top:474.61px" width="20" height="17" viewBox="0 0 20 17"><path d="M1.5 2.5 Q1.5 1 3 1 H7.5 L9 2.5 H16 Q17.5 2.5 17.5 4 V14.5 H1.5 Z" fill="#F0C050" stroke="#D09A30" stroke-width="1"/><path d="M2.5 6 H17 Q18 6 17.8 7.5 L17 15 H2.5 Z" fill="#FCE07A" stroke="#D8A030" stroke-width="0.8"/><path d="M3 7 H16.5" stroke="#FFF4C0" stroke-width="1.2"/><circle cx="6.5" cy="11.5" r="5.6" fill="#2E9A2E" stroke="#1C7A1C" stroke-width="0.7"/><path d="M3.2 11.8 L5.5 14.3 L10.1 8.7" fill="none" stroke="#fff" stroke-width="1.8"/></svg>
<div class="a" style="left:67px;top:502px;width:13px;height:1px;background:repeating-linear-gradient(90deg,#A0A0A0 0 1px,transparent 1px 2px)"></div>
<div class="a" style="left:61.5px;top:496.74px;width:10.5px;height:10.5px;border:1px solid #7A98C0;border-radius:1.5px;background:linear-gradient(#FFFFFF,#E8E4D4)"></div><div class="a" style="left:64.0px;top:501.24px;width:5.5px;height:1.6px;background:#000"></div><div class="a" style="left:66.0px;top:499.24px;width:1.6px;height:5.5px;background:#000"></div>
<svg class="a" style="left:79.5px;top:493.84px" width="20" height="17" viewBox="0 0 20 17"><path d="M1.5 2.5 Q1.5 1 3 1 H7.5 L9 2.5 H16 Q17.5 2.5 17.5 4 V14.5 H1.5 Z" fill="#F0C050" stroke="#D09A30" stroke-width="1"/><path d="M2.5 6 H17 Q18 6 17.8 7.5 L17 15 H2.5 Z" fill="#FCE07A" stroke="#D8A030" stroke-width="0.8"/><path d="M3 7 H16.5" stroke="#FFF4C0" stroke-width="1.2"/><circle cx="6.5" cy="11.5" r="5.6" fill="#E03A1A" stroke="#B02010" stroke-width="0.7"/><rect x="5.5" y="7.7" width="2" height="4.6" fill="#fff"/><rect x="5.5" y="13.3" width="2" height="1.8" fill="#fff"/></svg>
<div class="a" style="left:67px;top:521px;width:13px;height:1px;background:repeating-linear-gradient(90deg,#A0A0A0 0 1px,transparent 1px 2px)"></div>
<div class="a" style="left:61.5px;top:515.97px;width:10.5px;height:10.5px;border:1px solid #7A98C0;border-radius:1.5px;background:linear-gradient(#FFFFFF,#E8E4D4)"></div><div class="a" style="left:64.0px;top:520.47px;width:5.5px;height:1.6px;background:#000"></div><div class="a" style="left:66.0px;top:518.47px;width:1.6px;height:5.5px;background:#000"></div>
<svg class="a" style="left:79.5px;top:513.07px" width="20" height="17" viewBox="0 0 20 17"><path d="M1.5 2.5 Q1.5 1 3 1 H7.5 L9 2.5 H16 Q17.5 2.5 17.5 4 V14.5 H1.5 Z" fill="#F0C050" stroke="#D09A30" stroke-width="1"/><path d="M2.5 6 H17 Q18 6 17.8 7.5 L17 15 H2.5 Z" fill="#FCE07A" stroke="#D8A030" stroke-width="0.8"/><path d="M3 7 H16.5" stroke="#FFF4C0" stroke-width="1.2"/><circle cx="6.5" cy="11.5" r="5.6" fill="#E03A1A" stroke="#B02010" stroke-width="0.7"/><rect x="5.5" y="7.7" width="2" height="4.6" fill="#fff"/><rect x="5.5" y="13.3" width="2" height="1.8" fill="#fff"/></svg>
<div class="a" style="left:67px;top:541px;width:13px;height:1px;background:repeating-linear-gradient(90deg,#A0A0A0 0 1px,transparent 1px 2px)"></div>
<div class="a" style="left:61.5px;top:535.2px;width:10.5px;height:10.5px;border:1px solid #7A98C0;border-radius:1.5px;background:linear-gradient(#FFFFFF,#E8E4D4)"></div><div class="a" style="left:64.0px;top:539.7px;width:5.5px;height:1.6px;background:#000"></div><div class="a" style="left:66.0px;top:537.7px;width:1.6px;height:5.5px;background:#000"></div>
<svg class="a" style="left:79.5px;top:532.3000000000001px" width="20" height="17" viewBox="0 0 20 17"><path d="M1.5 2.5 Q1.5 1 3 1 H7.5 L9 2.5 H16 Q17.5 2.5 17.5 4 V14.5 H1.5 Z" fill="#F0C050" stroke="#D09A30" stroke-width="1"/><path d="M2.5 6 H17 Q18 6 17.8 7.5 L17 15 H2.5 Z" fill="#FCE07A" stroke="#D8A030" stroke-width="0.8"/><path d="M3 7 H16.5" stroke="#FFF4C0" stroke-width="1.2"/><ellipse cx="6.5" cy="12.5" rx="5" ry="3.5" fill="#E8E8E8" stroke="#C8C8C8" stroke-width="0.8"/></svg>
<div class="a" style="left:67px;top:560px;width:13px;height:1px;background:repeating-linear-gradient(90deg,#A0A0A0 0 1px,transparent 1px 2px)"></div>
<div class="a" style="left:61.5px;top:554.4300000000001px;width:10.5px;height:10.5px;border:1px solid #7A98C0;border-radius:1.5px;background:linear-gradient(#FFFFFF,#E8E4D4)"></div><div class="a" style="left:64.0px;top:558.9300000000001px;width:5.5px;height:1.6px;background:#000"></div><div class="a" style="left:66.0px;top:556.9300000000001px;width:1.6px;height:5.5px;background:#000"></div>
<svg class="a" style="left:79.5px;top:551.5300000000001px" width="20" height="17" viewBox="0 0 20 17"><path d="M1.5 2.5 Q1.5 1 3 1 H7.5 L9 2.5 H16 Q17.5 2.5 17.5 4 V14.5 H1.5 Z" fill="#F0C050" stroke="#D09A30" stroke-width="1"/><path d="M2.5 6 H17 Q18 6 17.8 7.5 L17 15 H2.5 Z" fill="#FCE07A" stroke="#D8A030" stroke-width="0.8"/><path d="M3 7 H16.5" stroke="#FFF4C0" stroke-width="1.2"/><circle cx="6.5" cy="11.5" r="5.6" fill="#2E9A2E" stroke="#1C7A1C" stroke-width="0.7"/><path d="M3.2 11.8 L5.5 14.3 L10.1 8.7" fill="none" stroke="#fff" stroke-width="1.8"/></svg>
<div class="a" style="left:67px;top:579px;width:13px;height:1px;background:repeating-linear-gradient(90deg,#A0A0A0 0 1px,transparent 1px 2px)"></div>
<div class="a" style="left:61.5px;top:573.66px;width:10.5px;height:10.5px;border:1px solid #7A98C0;border-radius:1.5px;background:linear-gradient(#FFFFFF,#E8E4D4)"></div><div class="a" style="left:64.0px;top:578.16px;width:5.5px;height:1.6px;background:#000"></div><div class="a" style="left:66.0px;top:576.16px;width:1.6px;height:5.5px;background:#000"></div>
<svg class="a" style="left:79.5px;top:570.76px" width="20" height="17" viewBox="0 0 20 17"><path d="M1.5 2.5 Q1.5 1 3 1 H7.5 L9 2.5 H16 Q17.5 2.5 17.5 4 V14.5 H1.5 Z" fill="#F0C050" stroke="#D09A30" stroke-width="1"/><path d="M2.5 6 H17 Q18 6 17.8 7.5 L17 15 H2.5 Z" fill="#FCE07A" stroke="#D8A030" stroke-width="0.8"/><path d="M3 7 H16.5" stroke="#FFF4C0" stroke-width="1.2"/><circle cx="6.5" cy="11.5" r="5.6" fill="#E03A1A" stroke="#B02010" stroke-width="0.7"/><rect x="5.5" y="7.7" width="2" height="4.6" fill="#fff"/><rect x="5.5" y="13.3" width="2" height="1.8" fill="#fff"/></svg>
<div class="a" style="left:38.5px;top:592.89px;width:10.5px;height:10.5px;border:1px solid #7A98C0;border-radius:1.5px;background:linear-gradient(#FFFFFF,#E8E4D4)"></div><div class="a" style="left:41.0px;top:597.39px;width:5.5px;height:1.6px;background:#000"></div><div class="a" style="left:43.0px;top:595.39px;width:1.6px;height:5.5px;background:#000"></div>
<div class="a" style="left:49px;top:598px;width:7px;height:1px;background:repeating-linear-gradient(90deg,#A0A0A0 0 1px,transparent 1px 2px)"></div>
<svg class="a" style="left:56px;top:589.99px" width="20" height="17" viewBox="0 0 20 17"><path d="M1.5 2.5 Q1.5 1 3 1 H7.5 L9 2.5 H16 Q17.5 2.5 17.5 4 V14.5 H1.5 Z" fill="#F0C050" stroke="#D09A30" stroke-width="1"/><path d="M2.5 6 H17 Q18 6 17.8 7.5 L17 15 H2.5 Z" fill="#FCE07A" stroke="#D8A030" stroke-width="0.8"/><path d="M3 7 H16.5" stroke="#FFF4C0" stroke-width="1.2"/><circle cx="6.5" cy="11.5" r="5.6" fill="#E03A1A" stroke="#B02010" stroke-width="0.7"/><rect x="5.5" y="7.7" width="2" height="4.6" fill="#fff"/><rect x="5.5" y="13.3" width="2" height="1.8" fill="#fff"/></svg>
<svg class="a" style="left:12px;top:662px" width="20" height="19" viewBox="0 0 20 19"><path d="M5 18 V8 H1.5 L6.5 1.5 L11.5 8 H8 V15 H19" fill="none" stroke="#3A9A3A" stroke-width="0"/><path d="M2 8 L6.5 1.5 L11 8 H8.5 V14 Q8.5 16 10.5 16 H11 V19 H8 Q4.5 19 4.5 15 V8 Z" fill="#6AC86A" stroke="#2E8A2E" stroke-width="0.8"/><rect x="11" y="15" width="2.5" height="3.5" fill="#3A9A3A"/><rect x="14.5" y="15" width="2.5" height="3.5" fill="#3A9A3A"/></svg>
<svg class="a" style="left:12px;top:683px" width="20" height="17" viewBox="0 0 20 17"><path d="M1.5 2.5 Q1.5 1 3 1 H7.5 L9 2.5 H16 Q17.5 2.5 17.5 4 V14.5 H1.5 Z" fill="#F0C050" stroke="#D09A30" stroke-width="1"/><path d="M2.5 6 H17 Q18 6 17.8 7.5 L17 15 H2.5 Z" fill="#FCE07A" stroke="#D8A030" stroke-width="0.8"/><path d="M3 7 H16.5" stroke="#FFF4C0" stroke-width="1.2"/></svg>
<svg class="a" style="left:12px;top:702.38px" width="19" height="19" viewBox="0 0 19 19"><rect x="0.5" y="0.5" width="18" height="18" fill="#000" stroke="#1E3A8A" stroke-width="1.2"/><path d="M1 1.5 H18" stroke="#2A5AB0" stroke-width="1.2"/><path d="M17.5 5.5 H14.5 V12.5 H17.5 M14.5 9 H17" fill="none" stroke="#E00000" stroke-width="1.3"/><circle cx="6" cy="12.3" r="5.8" fill="#2E9A2E" stroke="#1C7A1C" stroke-width="0.7"/><path d="M2.7 12.600000000000001 L5 15.100000000000001 L9.6 9.5" fill="none" stroke="#fff" stroke-width="1.8"/></svg>
<svg class="a" style="left:12px;top:722.82px" width="19" height="19" viewBox="0 0 19 19"><rect x="0.5" y="0.5" width="18" height="18" fill="#000" stroke="#1E3A8A" stroke-width="1.2"/><path d="M1 1.5 H18" stroke="#2A5AB0" stroke-width="1.2"/><path d="M17.5 5.5 H14.5 V12.5 H17.5 M14.5 9 H17" fill="none" stroke="#E00000" stroke-width="1.3"/><circle cx="6" cy="12.3" r="5.8" fill="#E03A1A" stroke="#B02010" stroke-width="0.7"/><rect x="5" y="8.5" width="2" height="4.6" fill="#fff"/><rect x="5" y="14.100000000000001" width="2" height="1.8" fill="#fff"/></svg>
<svg class="a" style="left:12px;top:743.26px" width="19" height="19" viewBox="0 0 19 19"><rect x="0.5" y="0.5" width="18" height="18" fill="#000" stroke="#1E3A8A" stroke-width="1.2"/><path d="M1 1.5 H18" stroke="#2A5AB0" stroke-width="1.2"/><path d="M17.5 5.5 H14.5 V12.5 H17.5 M14.5 9 H17" fill="none" stroke="#E00000" stroke-width="1.3"/><circle cx="6" cy="12.3" r="5.8" fill="#2E9A2E" stroke="#1C7A1C" stroke-width="0.7"/><path d="M2.7 12.600000000000001 L5 15.100000000000001 L9.6 9.5" fill="none" stroke="#fff" stroke-width="1.8"/></svg>
<svg class="a" style="left:12px;top:763.7px" width="19" height="19" viewBox="0 0 19 19"><rect x="0.5" y="0.5" width="18" height="18" fill="#000" stroke="#1E3A8A" stroke-width="1.2"/><path d="M1 1.5 H18" stroke="#2A5AB0" stroke-width="1.2"/><path d="M17.5 5.5 H14.5 V12.5 H17.5 M14.5 9 H17" fill="none" stroke="#E00000" stroke-width="1.3"/><circle cx="6" cy="12.3" r="5.8" fill="#2E9A2E" stroke="#1C7A1C" stroke-width="0.7"/><path d="M2.7 12.600000000000001 L5 15.100000000000001 L9.6 9.5" fill="none" stroke="#fff" stroke-width="1.8"/></svg>
<svg class="a" style="left:12px;top:784.14px" width="19" height="19" viewBox="0 0 19 19"><rect x="0.5" y="0.5" width="18" height="18" fill="#000" stroke="#1E3A8A" stroke-width="1.2"/><path d="M1 1.5 H18" stroke="#2A5AB0" stroke-width="1.2"/><path d="M17.5 5.5 H14.5 V12.5 H17.5 M14.5 9 H17" fill="none" stroke="#E00000" stroke-width="1.3"/><circle cx="6" cy="12.3" r="5.8" fill="#2E9A2E" stroke="#1C7A1C" stroke-width="0.7"/><path d="M2.7 12.600000000000001 L5 15.100000000000001 L9.6 9.5" fill="none" stroke="#fff" stroke-width="1.8"/></svg>
<svg class="a" style="left:12px;top:804.58px" width="19" height="19" viewBox="0 0 19 19"><rect x="0.5" y="0.5" width="18" height="18" fill="#000" stroke="#1E3A8A" stroke-width="1.2"/><path d="M1 1.5 H18" stroke="#2A5AB0" stroke-width="1.2"/><path d="M17.5 5.5 H14.5 V12.5 H17.5 M14.5 9 H17" fill="none" stroke="#E00000" stroke-width="1.3"/><circle cx="6" cy="12.3" r="5.8" fill="#2E9A2E" stroke="#1C7A1C" stroke-width="0.7"/><path d="M2.7 12.600000000000001 L5 15.100000000000001 L9.6 9.5" fill="none" stroke="#fff" stroke-width="1.8"/></svg>
<svg class="a" style="left:12px;top:825.02px" width="19" height="19" viewBox="0 0 19 19"><rect x="0.5" y="0.5" width="18" height="18" fill="#000" stroke="#1E3A8A" stroke-width="1.2"/><path d="M1 1.5 H18" stroke="#2A5AB0" stroke-width="1.2"/><path d="M17.5 5.5 H14.5 V12.5 H17.5 M14.5 9 H17" fill="none" stroke="#E00000" stroke-width="1.3"/><circle cx="6" cy="12.3" r="5.8" fill="#2E9A2E" stroke="#1C7A1C" stroke-width="0.7"/><path d="M2.7 12.600000000000001 L5 15.100000000000001 L9.6 9.5" fill="none" stroke="#fff" stroke-width="1.8"/></svg>
<svg class="a" style="left:12px;top:845.46px" width="19" height="19" viewBox="0 0 19 19"><rect x="0.5" y="0.5" width="18" height="18" fill="#000" stroke="#1E3A8A" stroke-width="1.2"/><path d="M1 1.5 H18" stroke="#2A5AB0" stroke-width="1.2"/><path d="M17.5 5.5 H14.5 V12.5 H17.5 M14.5 9 H17" fill="none" stroke="#E00000" stroke-width="1.3"/><circle cx="6" cy="12.3" r="5.8" fill="#2E9A2E" stroke="#1C7A1C" stroke-width="0.7"/><path d="M2.7 12.600000000000001 L5 15.100000000000001 L9.6 9.5" fill="none" stroke="#fff" stroke-width="1.8"/></svg>
<svg class="a" style="left:12px;top:865.9px" width="19" height="19" viewBox="0 0 19 19"><rect x="0.5" y="0.5" width="18" height="18" fill="#000" stroke="#1E3A8A" stroke-width="1.2"/><path d="M1 1.5 H18" stroke="#2A5AB0" stroke-width="1.2"/><path d="M17.5 5.5 H14.5 V12.5 H17.5 M14.5 9 H17" fill="none" stroke="#E00000" stroke-width="1.3"/><circle cx="6" cy="12.3" r="5.8" fill="#2E9A2E" stroke="#1C7A1C" stroke-width="0.7"/><path d="M2.7 12.600000000000001 L5 15.100000000000001 L9.6 9.5" fill="none" stroke="#fff" stroke-width="1.8"/></svg>
<svg class="a" style="left:12px;top:886.34px" width="19" height="19" viewBox="0 0 19 19"><rect x="0.5" y="0.5" width="18" height="18" fill="#000" stroke="#1E3A8A" stroke-width="1.2"/><path d="M1 1.5 H18" stroke="#2A5AB0" stroke-width="1.2"/><path d="M17.5 5.5 H14.5 V12.5 H17.5 M14.5 9 H17" fill="none" stroke="#E00000" stroke-width="1.3"/><circle cx="6" cy="12.3" r="5.8" fill="#2E9A2E" stroke="#1C7A1C" stroke-width="0.7"/><path d="M2.7 12.600000000000001 L5 15.100000000000001 L9.6 9.5" fill="none" stroke="#fff" stroke-width="1.8"/></svg>
<svg class="a" style="left:12px;top:906.78px" width="19" height="19" viewBox="0 0 19 19"><rect x="0.5" y="0.5" width="18" height="18" fill="#000" stroke="#1E3A8A" stroke-width="1.2"/><path d="M1 1.5 H18" stroke="#2A5AB0" stroke-width="1.2"/><path d="M17.5 5.5 H14.5 V12.5 H17.5 M14.5 9 H17" fill="none" stroke="#E00000" stroke-width="1.3"/><circle cx="6" cy="12.3" r="5.8" fill="#2E9A2E" stroke="#1C7A1C" stroke-width="0.7"/><path d="M2.7 12.600000000000001 L5 15.100000000000001 L9.6 9.5" fill="none" stroke="#fff" stroke-width="1.8"/></svg>
<svg class="a" style="left:12px;top:927.22px" width="19" height="19" viewBox="0 0 19 19"><rect x="0.5" y="0.5" width="18" height="18" fill="#000" stroke="#1E3A8A" stroke-width="1.2"/><path d="M1 1.5 H18" stroke="#2A5AB0" stroke-width="1.2"/><path d="M17.5 5.5 H14.5 V12.5 H17.5 M14.5 9 H17" fill="none" stroke="#E00000" stroke-width="1.3"/><circle cx="6" cy="12.3" r="5.8" fill="#2E9A2E" stroke="#1C7A1C" stroke-width="0.7"/><path d="M2.7 12.600000000000001 L5 15.100000000000001 L9.6 9.5" fill="none" stroke="#fff" stroke-width="1.8"/></svg>
<svg class="a" style="left:12px;top:947.6600000000001px" width="19" height="19" viewBox="0 0 19 19"><rect x="0.5" y="0.5" width="18" height="18" fill="#000" stroke="#1E3A8A" stroke-width="1.2"/><path d="M1 1.5 H18" stroke="#2A5AB0" stroke-width="1.2"/><path d="M17.5 5.5 H14.5 V12.5 H17.5 M14.5 9 H17" fill="none" stroke="#E00000" stroke-width="1.3"/><circle cx="6" cy="12.3" r="5.8" fill="#2E9A2E" stroke="#1C7A1C" stroke-width="0.7"/><path d="M2.7 12.600000000000001 L5 15.100000000000001 L9.6 9.5" fill="none" stroke="#fff" stroke-width="1.8"/></svg>
<svg class="a" style="left:12px;top:968.1px" width="19" height="19" viewBox="0 0 19 19"><rect x="0.5" y="0.5" width="18" height="18" fill="#000" stroke="#1E3A8A" stroke-width="1.2"/><path d="M1 1.5 H18" stroke="#2A5AB0" stroke-width="1.2"/><path d="M17.5 5.5 H14.5 V12.5 H17.5 M14.5 9 H17" fill="none" stroke="#E00000" stroke-width="1.3"/><circle cx="6" cy="12.3" r="5.8" fill="#2E9A2E" stroke="#1C7A1C" stroke-width="0.7"/><path d="M2.7 12.600000000000001 L5 15.100000000000001 L9.6 9.5" fill="none" stroke="#fff" stroke-width="1.8"/></svg>
<svg class="a" style="left:12px;top:988.54px" width="19" height="19" viewBox="0 0 19 19"><rect x="0.5" y="0.5" width="18" height="18" fill="#000" stroke="#1E3A8A" stroke-width="1.2"/><path d="M1 1.5 H18" stroke="#2A5AB0" stroke-width="1.2"/><path d="M17.5 5.5 H14.5 V12.5 H17.5 M14.5 9 H17" fill="none" stroke="#E00000" stroke-width="1.3"/><circle cx="6" cy="12.3" r="5.8" fill="#2E9A2E" stroke="#1C7A1C" stroke-width="0.7"/><path d="M2.7 12.600000000000001 L5 15.100000000000001 L9.6 9.5" fill="none" stroke="#fff" stroke-width="1.8"/></svg>
<div class="a" style="left:12px;top:1008px;width:19px;height:4px;background:#000;border-top:1.2px solid #1E3A8A"></div>
<!--/ITEMS-->
<!-- filter -->
<div class="t" style="left:7px;top:1043px">Filter:</div>
<div class="a" style="left:42px;top:1037px;width:268px;height:24px;background:#fff;border:1px solid #7F9DB9"></div>
<div class="a" style="left:49px;top:1040px;width:208px;height:16px;background:#316AC5"></div>
<div class="t" style="left:49px;top:1042px;color:#fff;letter-spacing:0.7px">*.sce; *.sci; *.c; *.txt; *.csv; *.tsv</div>

<!-- TABS -->
<div class="tab" style="left:319px;top:284px;width:146px;height:22px"></div>
<svg class="a" style="left:325px;top:289px" width="16" height="16" viewBox="0 0 16 16"><rect x="0.7" y="0.7" width="14.6" height="14.6" rx="1.8" fill="#9CB8E8" stroke="#3A6AD0" stroke-width="1.4"/><rect x="1.5" y="6" width="13" height="3.5" fill="#4A7CD8"/><rect x="3" y="11.2" width="10" height="2" fill="#5FA08A"/><rect x="3" y="2.5" width="2" height="2" fill="#2A4EA0"/></svg>
<div class="tt" style="left:301.5px;top:291px">Dynamic.sce</div>
<div class="tab" style="left:466px;top:284px;width:143px;height:22px"></div>
<svg class="a" style="left:472px;top:289px" width="16" height="16" viewBox="0 0 16 16"><rect x="0.7" y="0.7" width="14.6" height="14.6" rx="1.8" fill="#9CB8E8" stroke="#3A6AD0" stroke-width="1.4"/><rect x="1.5" y="6" width="13" height="3.5" fill="#4A7CD8"/><rect x="3" y="11.2" width="10" height="2" fill="#5FA08A"/><rect x="3" y="2.5" width="2" height="2" fill="#2A4EA0"/></svg>
<div class="tt" style="left:447px;top:291px">imaclimr.sce</div>
<div class="tab" style="left:610px;top:284px;width:142px;height:22px"></div>
<svg class="a" style="left:616px;top:289px" width="16" height="16" viewBox="0 0 16 16"><rect x="0.7" y="0.7" width="14.6" height="14.6" rx="1.8" fill="#9CB8E8" stroke="#3A6AD0" stroke-width="1.4"/><rect x="1.5" y="6" width="13" height="3.5" fill="#4A7CD8"/><rect x="3" y="11.2" width="10" height="2" fill="#5FA08A"/><rect x="3" y="2.5" width="2" height="2" fill="#2A4EA0"/></svg>
<div class="tt" style="left:590px;top:291px">CCSphil.sce</div>
<div class="tab" style="left:753px;top:284px;width:198px;height:22px"></div>
<svg class="a" style="left:759px;top:289px" width="16" height="16" viewBox="0 0 16 16"><rect x="0.7" y="0.7" width="14.6" height="14.6" rx="1.8" fill="#9CB8E8" stroke="#3A6AD0" stroke-width="1.4"/><rect x="1.5" y="6" width="13" height="3.5" fill="#4A7CD8"/><rect x="3" y="11.2" width="10" height="2" fill="#5FA08A"/><rect x="3" y="2.5" width="2" height="2" fill="#2A4EA0"/></svg>
<div class="tt" style="left:761px;top:291px">Extraction-generic.sce</div>
<div class="tab" style="left:953px;top:284px;width:183px;height:22px"></div>
<svg class="a" style="left:959px;top:289px" width="16" height="16" viewBox="0 0 16 16"><rect x="0.7" y="0.7" width="14.6" height="14.6" rx="1.8" fill="#9CB8E8" stroke="#3A6AD0" stroke-width="1.4"/><rect x="1.5" y="6" width="13" height="3.5" fill="#4A7CD8"/><rect x="3" y="11.2" width="10" height="2" fill="#5FA08A"/><rect x="3" y="2.5" width="2" height="2" fill="#2A4EA0"/></svg>
<div class="tt" style="left:953px;top:291px">userDefineLang.xml</div>
<div class="tab" style="left:1137px;top:284px;width:136px;height:22px"></div>
<svg class="a" style="left:1143px;top:289px" width="16" height="16" viewBox="0 0 16 16"><rect x="0.7" y="0.7" width="14.6" height="14.6" rx="1.8" fill="#9CB8E8" stroke="#3A6AD0" stroke-width="1.4"/><rect x="1.5" y="6" width="13" height="3.5" fill="#4A7CD8"/><rect x="3" y="11.2" width="10" height="2" fill="#5FA08A"/><rect x="3" y="2.5" width="2" height="2" fill="#2A4EA0"/></svg>
<div class="tt" style="left:1114px;top:291px">ext12c.sce</div>
<div class="tab" style="left:319px;top:309px;width:198px;height:22px;"></div>
<svg class="a" style="left:325px;top:313.5px" width="16" height="16" viewBox="0 0 16 16"><rect x="0.7" y="0.7" width="14.6" height="14.6" rx="1.8" fill="#9CB8E8" stroke="#3A6AD0" stroke-width="1.4"/><rect x="1.5" y="6" width="13" height="3.5" fill="#4A7CD8"/><rect x="3" y="11.2" width="10" height="2" fill="#5FA08A"/><rect x="3" y="2.5" width="2" height="2" fill="#2A4EA0"/></svg>
<div class="tt" style="left:327px;top:315px">ext_imaclim.c</div>
<div class="tab" style="left:518px;top:309px;width:171px;height:22px;"></div>
<svg class="a" style="left:524px;top:313.5px" width="16" height="16" viewBox="0 0 16 16"><rect x="0.7" y="0.7" width="14.6" height="14.6" rx="1.8" fill="#9CB8E8" stroke="#3A6AD0" stroke-width="1.4"/><rect x="1.5" y="6" width="13" height="3.5" fill="#4A7CD8"/><rect x="3" y="11.2" width="10" height="2" fill="#5FA08A"/><rect x="3" y="2.5" width="2" height="2" fill="#2A4EA0"/></svg>
<div class="tt" style="left:513px;top:315px">myfile.txt</div>
<div class="tab" style="left:690px;top:309px;width:230px;height:22px;"></div>
<svg class="a" style="left:696px;top:313.5px" width="16" height="16" viewBox="0 0 16 16"><rect x="0.7" y="0.7" width="14.6" height="14.6" rx="1.8" fill="#9CB8E8" stroke="#3A6AD0" stroke-width="1.4"/><rect x="1.5" y="6" width="13" height="3.5" fill="#4A7CD8"/><rect x="3" y="11.2" width="10" height="2" fill="#5FA08A"/><rect x="3" y="2.5" width="2" height="2" fill="#2A4EA0"/></svg>
<div class="tt" style="left:715px;top:315px">howto_svn_mail.txt</div>
<div class="tab" style="left:921px;top:309px;width:189px;height:22px;border-right:none;"></div>
<svg class="a" style="left:927px;top:313.5px" width="16" height="16" viewBox="0 0 16 16"><rect x="0.7" y="0.7" width="14.6" height="14.6" rx="1.8" fill="#9CB8E8" stroke="#3A6AD0" stroke-width="1.4"/><rect x="1.5" y="6" width="13" height="3.5" fill="#4A7CD8"/><rect x="3" y="11.2" width="10" height="2" fill="#5FA08A"/><rect x="3" y="2.5" width="2" height="2" fill="#2A4EA0"/></svg>
<div class="tt" style="left:926px;top:315px">Indexes.sce</div>

<!--LEFT-->
<svg class="a" style="left:9px;top:309px" width="4" height="28" viewBox="0 0 4 28"><rect x="1" y="0.0" width="2" height="2" fill="#B8B4A2"/><rect x="1" y="3.2" width="2" height="2" fill="#B8B4A2"/><rect x="1" y="6.4" width="2" height="2" fill="#B8B4A2"/><rect x="1" y="9.600000000000001" width="2" height="2" fill="#B8B4A2"/><rect x="1" y="12.8" width="2" height="2" fill="#B8B4A2"/><rect x="1" y="16.0" width="2" height="2" fill="#B8B4A2"/><rect x="1" y="19.200000000000003" width="2" height="2" fill="#B8B4A2"/><rect x="1" y="22.400000000000002" width="2" height="2" fill="#B8B4A2"/><rect x="1" y="25.6" width="2" height="2" fill="#B8B4A2"/></svg>
<svg class="a" style="left:24px;top:309px" width="19" height="19" viewBox="0 0 19 19"><circle cx="9.5" cy="9" r="8.5" fill="#ACA899"/><path d="M11.5 4.5 L6.5 9 L11.5 13.5 Z" fill="#fff"/></svg>
<svg class="a" style="left:50px;top:315px" width="8" height="5" viewBox="0 0 8 5"><path d="M0.5 0.5 H7 L3.75 4 Z" fill="#ACA899"/></svg>
<svg class="a" style="left:68px;top:309px" width="19" height="19" viewBox="0 0 19 19"><circle cx="9.5" cy="9" r="8.5" fill="#ACA899"/><path d="M7.5 4.5 L12.5 9 L7.5 13.5 Z" fill="#fff"/></svg>
<svg class="a" style="left:93px;top:315px" width="8" height="5" viewBox="0 0 8 5"><path d="M0.5 0.5 H7 L3.75 4 Z" fill="#ACA899"/></svg>
<div class="a" style="left:110px;top:307px;width:1px;height:23px;background:#CDC9B5"></div><div class="a" style="left:111px;top:307px;width:1px;height:23px;background:#fff"></div>
<svg class="a" style="left:120px;top:309px" width="20" height="20" viewBox="0 0 20 20"><path d="M2.5 1.5 H11 L15.5 6 V18.5 H2.5 Z" fill="#fff" stroke="#C6C6C6" stroke-width="1"/><path d="M11 1.5 V6 H15.5" fill="#EEE" stroke="#C6C6C6"/><circle cx="14.5" cy="15.5" r="4.3" fill="#3A9A3A" stroke="#1F7A1F" stroke-width="0.8"/><path d="M14.5 12.8 V18.2 M11.8 15.5 H17.2" stroke="#fff" stroke-width="1.8"/></svg>
<svg class="a" style="left:146px;top:311px" width="21" height="18" viewBox="0 0 21 18"><path d="M1.5 3.5 H7 L8.5 5 H17.5 V15.5 H1.5 Z" fill="#F8D070" stroke="#E0902A" stroke-width="1.2"/><path d="M2.2 7 H16.8 V14.8 H2.2 Z" fill="#FBE8A8"/><circle cx="16" cy="13.5" r="4.2" fill="#3A9A3A" stroke="#1F7A1F" stroke-width="0.8"/><path d="M16 11 V16 M13.5 13.5 H18.5" stroke="#fff" stroke-width="1.7"/></svg>
<svg class="a" style="left:174px;top:309px" width="21" height="19" viewBox="0 0 21 19"><path d="M1.5 5.5 H7 L8.5 7 H17.5 V17.5 H1.5 Z" fill="#F8D070" stroke="#E0902A" stroke-width="1.2"/><path d="M2.2 9 H16.8 V16.8 H2.2 Z" fill="#FBE8A8"/><circle cx="14" cy="6" r="4.3" fill="#C8C8F8" stroke="#8AA0D8" stroke-width="1"/><path d="M17 9 L19.5 11.5" stroke="#C89040" stroke-width="1.8"/></svg>
<svg class="a" style="left:202px;top:308px" width="21" height="21" viewBox="0 0 21 21"><path d="M1.5 7.5 H7 L8.5 9 H17.5 V19.5 H1.5 Z" fill="#F8D070" stroke="#E0902A" stroke-width="1.2"/><path d="M2.2 11 H16.8 V18.8 H2.2 Z" fill="#FBE8A8"/><circle cx="13" cy="5" r="3.3" fill="#F0C0A0" stroke="#A06030" stroke-width="0.8"/><path d="M8.5 12 Q13 6 17.5 12 V14 H8.5 Z" fill="#4A90E0"/></svg>
<svg class="a" style="left:230px;top:310px" width="21" height="18" viewBox="0 0 21 18"><rect x="1" y="1" width="18" height="15" fill="#ACA899"/><rect x="3" y="3" width="14" height="2" fill="#fff"/><rect x="3" y="7" width="3" height="1.5" fill="#fff"/><rect x="8" y="7" width="9" height="1.5" fill="#fff"/><path d="M11 16.5 H19.5 V12" fill="none" stroke="#fff" stroke-width="1"/></svg>
<div class="a" style="left:258px;top:307px;width:1px;height:23px;background:#CDC9B5"></div><div class="a" style="left:259px;top:307px;width:1px;height:23px;background:#fff"></div>
<svg class="a" style="left:266px;top:309px" width="22" height="19" viewBox="0 0 22 19"><path d="M2 9 Q4 3 13 3.5 V0.5 L19 5 L13 9.5 V6.5 Q6 6 2 9 Z" fill="#5CC060" stroke="#2E9A38" stroke-width="0.8"/><path d="M20 10 Q18 16 9 15.5 V18.5 L3 14 L9 9.5 V12.5 Q16 13 20 10 Z" fill="#5CC060" stroke="#2E9A38" stroke-width="0.8"/></svg>
<div class="a" style="left:288px;top:337px;width:21px;height:268px;background:linear-gradient(90deg,#EEEDE5,#FCFCFA 70%,#FDFDFA)"></div>
<div class="a sbtn" style="left:290px;top:340px;width:16px;height:16.5px"></div><svg class="a" style="left:0;top:0" width="1280" height="1280" viewBox="0 0 1280 1280" ><path d="M293.5 350.75 L298.0 346.25 L302.5 350.75" fill="none" stroke="#4D6185" stroke-width="2.4"/></svg>
<div class="a sbtn" style="left:289.5px;top:425px;width:17px;height:55px"></div><div class="a" style="left:294.0px;top:449.0px;width:8px;height:1px;background:#8CA8E8;box-shadow:0 1px 0 #EEF4FF"></div><div class="a" style="left:294.0px;top:451.0px;width:8px;height:1px;background:#8CA8E8;box-shadow:0 1px 0 #EEF4FF"></div><div class="a" style="left:294.0px;top:453.0px;width:8px;height:1px;background:#8CA8E8;box-shadow:0 1px 0 #EEF4FF"></div><div class="a" style="left:294.0px;top:455.0px;width:8px;height:1px;background:#8CA8E8;box-shadow:0 1px 0 #EEF4FF"></div>
<div class="a sbtn" style="left:290px;top:584.5px;width:16px;height:17.5px"></div><svg class="a" style="left:0;top:0" width="1280" height="1280" viewBox="0 0 1280 1280" ><path d="M293.5 590.75 L298.0 595.25 L302.5 590.75" fill="none" stroke="#4D6185" stroke-width="2.4"/></svg>
<div class="a" style="left:6px;top:605px;width:282px;height:21px;background:linear-gradient(#EEEDE5,#FCFCFA 70%,#FDFDFA)"></div>
<div class="a" style="left:288px;top:605px;width:21px;height:21px;background:#ECE9D8"></div>
<div class="a sbtn" style="left:7px;top:606.2px;width:18.5px;height:17px"></div><svg class="a" style="left:0;top:0" width="1280" height="1280" viewBox="0 0 1280 1280"><path d="M18.75 610.2 L14.25 614.7 L18.75 619.2" fill="none" stroke="#4D6185" stroke-width="2.4"/></svg>
<div class="a sbtn" style="left:29px;top:606.5px;width:158px;height:18.5px"></div><div class="a" style="left:104.5px;top:611.0px;width:1px;height:9.5px;background:#8CA8E8;box-shadow:1px 0 0 #EEF4FF"></div><div class="a" style="left:106.5px;top:611.0px;width:1px;height:9.5px;background:#8CA8E8;box-shadow:1px 0 0 #EEF4FF"></div><div class="a" style="left:108.5px;top:611.0px;width:1px;height:9.5px;background:#8CA8E8;box-shadow:1px 0 0 #EEF4FF"></div><div class="a" style="left:110.5px;top:611.0px;width:1px;height:9.5px;background:#8CA8E8;box-shadow:1px 0 0 #EEF4FF"></div>
<div class="a sbtn" style="left:268px;top:606.2px;width:17px;height:16.5px"></div><svg class="a" style="left:0;top:0" width="1280" height="1280" viewBox="0 0 1280 1280"><path d="M274.0 609.95 L278.5 614.45 L274.0 618.95" fill="none" stroke="#4D6185" stroke-width="2.4"/></svg>
<div class="a" style="left:288px;top:636px;width:21px;height:378px;background:linear-gradient(90deg,#EEEDE5,#FCFCFA 70%,#FDFDFA)"></div>
<div class="a sbtn" style="left:290px;top:637.5px;width:16px;height:18.5px"></div><svg class="a" style="left:0;top:0" width="1280" height="1280" viewBox="0 0 1280 1280" ><path d="M293.5 649.25 L298.0 644.75 L302.5 649.25" fill="none" stroke="#4D6185" stroke-width="2.4"/></svg>
<div class="a sbtn" style="left:289.5px;top:658px;width:17px;height:99.5px"></div><div class="a" style="left:294.0px;top:704.25px;width:8px;height:1px;background:#8CA8E8;box-shadow:0 1px 0 #EEF4FF"></div><div class="a" style="left:294.0px;top:706.25px;width:8px;height:1px;background:#8CA8E8;box-shadow:0 1px 0 #EEF4FF"></div><div class="a" style="left:294.0px;top:708.25px;width:8px;height:1px;background:#8CA8E8;box-shadow:0 1px 0 #EEF4FF"></div><div class="a" style="left:294.0px;top:710.25px;width:8px;height:1px;background:#8CA8E8;box-shadow:0 1px 0 #EEF4FF"></div>
<div class="a sbtn" style="left:290px;top:993px;width:16px;height:17px"></div><svg class="a" style="left:0;top:0" width="1280" height="1280" viewBox="0 0 1280 1280" ><path d="M293.5 999.0 L298.0 1003.5 L302.5 999.0" fill="none" stroke="#4D6185" stroke-width="2.4"/></svg>
<div class="a" style="left:6px;top:1013px;width:282px;height:21px;background:linear-gradient(#EEEDE5,#FCFCFA 70%,#FDFDFA)"></div>
<div class="a" style="left:288px;top:1013px;width:21px;height:21px;background:#ECE9D8"></div>
<div class="a sbtn" style="left:7px;top:1014.5px;width:18.5px;height:17.5px"></div><svg class="a" style="left:0;top:0" width="1280" height="1280" viewBox="0 0 1280 1280"><path d="M18.75 1018.75 L14.25 1023.25 L18.75 1027.75" fill="none" stroke="#4D6185" stroke-width="2.4"/></svg>
<div class="a sbtn" style="left:29px;top:1014px;width:181px;height:18.5px"></div><div class="a" style="left:116.0px;top:1018.5px;width:1px;height:9.5px;background:#8CA8E8;box-shadow:1px 0 0 #EEF4FF"></div><div class="a" style="left:118.0px;top:1018.5px;width:1px;height:9.5px;background:#8CA8E8;box-shadow:1px 0 0 #EEF4FF"></div><div class="a" style="left:120.0px;top:1018.5px;width:1px;height:9.5px;background:#8CA8E8;box-shadow:1px 0 0 #EEF4FF"></div><div class="a" style="left:122.0px;top:1018.5px;width:1px;height:9.5px;background:#8CA8E8;box-shadow:1px 0 0 #EEF4FF"></div>
<div class="a sbtn" style="left:268px;top:1014.5px;width:17.5px;height:17.5px"></div><svg class="a" style="left:0;top:0" width="1280" height="1280" viewBox="0 0 1280 1280"><path d="M274.25 1018.75 L278.75 1023.25 L274.25 1027.75" fill="none" stroke="#4D6185" stroke-width="2.4"/></svg>
<div class="a sbtn" style="left:290.5px;top:1039px;width:17px;height:20px"></div><svg class="a" style="left:0;top:0" width="1280" height="1280" viewBox="0 0 1280 1280" ><path d="M294.5 1046.5 L299.0 1051.0 L303.5 1046.5" fill="none" stroke="#4D6185" stroke-width="2.4"/></svg>
<!--/LEFT-->
<!-- EDITOR -->
<div class="a" style="left:315px;top:332px;width:960px;height:730px;border-top:2px solid #fff;border-left:2px solid #fff;border-right:2px solid #7E7B6C;border-bottom:2px solid #7E7B6C"></div>
<div class="a" style="left:321.5px;top:338px;width:947.5px;height:718px;background:#fff;border-top:2px solid #7E7B6C;border-left:2px solid #7E7B6C;border-right:2px solid #F8F7F2;border-bottom:2px solid #F8F7F2"></div>
<div class="a" style="left:1110px;top:307px;width:163px;height:30px;background:#ECE9D8;border-left:1px solid #fff;border-right:2px solid #7E7B6C"></div>
<div class="a" style="left:1111px;top:307px;width:162px;height:4.5px;background:#F8A838"></div>
<svg class="a" style="left:1116px;top:313.5px" width="16" height="16" viewBox="0 0 16 16"><rect x="0.7" y="0.7" width="14.6" height="14.6" rx="1.8" fill="#fff" stroke="#E03030" stroke-width="1.4"/><rect x="1.5" y="6" width="13" height="3.5" fill="#E04848"/><rect x="3" y="11" width="10" height="2.2" fill="none" stroke="#E04848" stroke-width="1"/><rect x="3" y="2.5" width="2" height="2" fill="#C02020"/></svg>
<div class="tt" style="left:1103.5px;top:315px;color:#000">new  2</div>
<div class="a" style="left:323.5px;top:340px;width:58.5px;height:713px;background:#D3D3D3"></div>
<div class="a" style="left:382px;top:340px;width:17px;height:713px;background:#F0F0F0;background-image:repeating-conic-gradient(#EAEAEA 0 25%,#FFFFFF 0 50%);background-size:2px 2px"></div>
<div class="a" style="left:400.5px;top:629px;width:866.5px;height:23.5px;background:#C8DCEC"></div>


<!-- code -->
<div class="code" style="top:341.5px"><span class="cm">//This is just an example for the screenshot</span>
<span class="cm">//Comments are in green!</span>

<span class="cm">//recognizes text, scilab functions, numbers and operators</span>
a<span class="op">=</span><span class="st">"hello"</span><span class="op">+</span> <i class="fn">string</i> ( <span class="nm">2</span> )<span class="op">;</span>
A<span class="op">=</span> <i class="fn">rand</i> (3<span class="op">,</span><span class="nm">5</span>)<span class="op">;</span>
B<span class="op">=</span>rand(2<span class="op">,</span><span class="nm">5</span>)<span class="op">;</span> <span class="cm">//known issue : parenthesis mess things up</span>

<span class="cm">//if you try to "fix" parenthesis messing up, make sure youre solution is</span>
<span class="cm">compatible with the next two lines</span>
C<span class="op">=</span>B(1<span class="op">,</span><span class="nm">3</span>)'
C<span class="op">=</span> C<span class="op">*</span><span class="nm">2</span><span class="op">;</span>
<span class="cm">//if it is, please let me know : vogt@centre-cired.fr</span></div>
<div class="ln" style="top:341px;white-space:pre">1
2
3
4
5
6
7
8
9

10
11
12</div>
<div class="a" style="left:973.5px;top:629px;width:2.5px;height:23px;background:#8000FF"></div>

<!-- tooltip -->
<div class="a" style="left:1162px;top:343px;width:46px;height:20px;background:#FFFFE1;border:1px solid #000;box-shadow:2px 2px 2px rgba(0,0,0,.35)"></div>
<div class="t" style="left:1165px;top:347px">new  2</div>

<!-- STATUS -->
<div class="a" style="left:5px;top:1062px;width:1270px;height:27px;background:linear-gradient(#ECE9D8,#EBE8D6 70%,#DDDACA)"></div>
<div class="a" style="left:418px;top:1065px;width:1px;height:21px;background:#CBC7B3"></div><div class="a" style="left:419px;top:1065px;width:1px;height:21px;background:#fff"></div>
<div class="a" style="left:659px;top:1065px;width:1px;height:21px;background:#CBC7B3"></div><div class="a" style="left:660px;top:1065px;width:1px;height:21px;background:#fff"></div>
<div class="a" style="left:937px;top:1065px;width:1px;height:21px;background:#CBC7B3"></div><div class="a" style="left:938px;top:1065px;width:1px;height:21px;background:#fff"></div>
<div class="a" style="left:1069px;top:1065px;width:1px;height:21px;background:#CBC7B3"></div><div class="a" style="left:1070px;top:1065px;width:1px;height:21px;background:#fff"></div>
<div class="a" style="left:1213.5px;top:1065px;width:1px;height:21px;background:#CBC7B3"></div><div class="a" style="left:1214.5px;top:1065px;width:1px;height:21px;background:#fff"></div>
<div class="a" style="left:1250px;top:1065px;width:1px;height:21px;background:#CBC7B3"></div><div class="a" style="left:1251px;top:1065px;width:1px;height:21px;background:#fff"></div>
<svg class="a" style="left:1259px;top:1074px" width="14" height="14" viewBox="0 0 14 14"><rect x="11" y="3" width="2" height="2" fill="#fff"/><rect x="10" y="2" width="2" height="2" fill="#B8B4A2"/><rect x="7" y="7" width="2" height="2" fill="#fff"/><rect x="6" y="6" width="2" height="2" fill="#B8B4A2"/><rect x="11" y="7" width="2" height="2" fill="#fff"/><rect x="10" y="6" width="2" height="2" fill="#B8B4A2"/><rect x="3" y="11" width="2" height="2" fill="#fff"/><rect x="2" y="10" width="2" height="2" fill="#B8B4A2"/><rect x="7" y="11" width="2" height="2" fill="#fff"/><rect x="6" y="10" width="2" height="2" fill="#B8B4A2"/><rect x="11" y="11" width="2" height="2" fill="#fff"/><rect x="10" y="10" width="2" height="2" fill="#B8B4A2"/></svg>
<div class="t" style="left:7px;top:1071px">User Define File - Scilab</div>
<div class="t" style="left:425px;top:1071px">length : 422    lines : 12</div>
<div class="t" style="left:666px;top:1071px">Ln : 12    Col : 54    Sel : 0</div>
<div class="t" style="left:942.5px;top:1071px">Dos\Windows</div>
<div class="t" style="left:1075px;top:1071px">ANSI</div>
<div class="t" style="left:1219.5px;top:1071px">INS</div>

</body></html>
